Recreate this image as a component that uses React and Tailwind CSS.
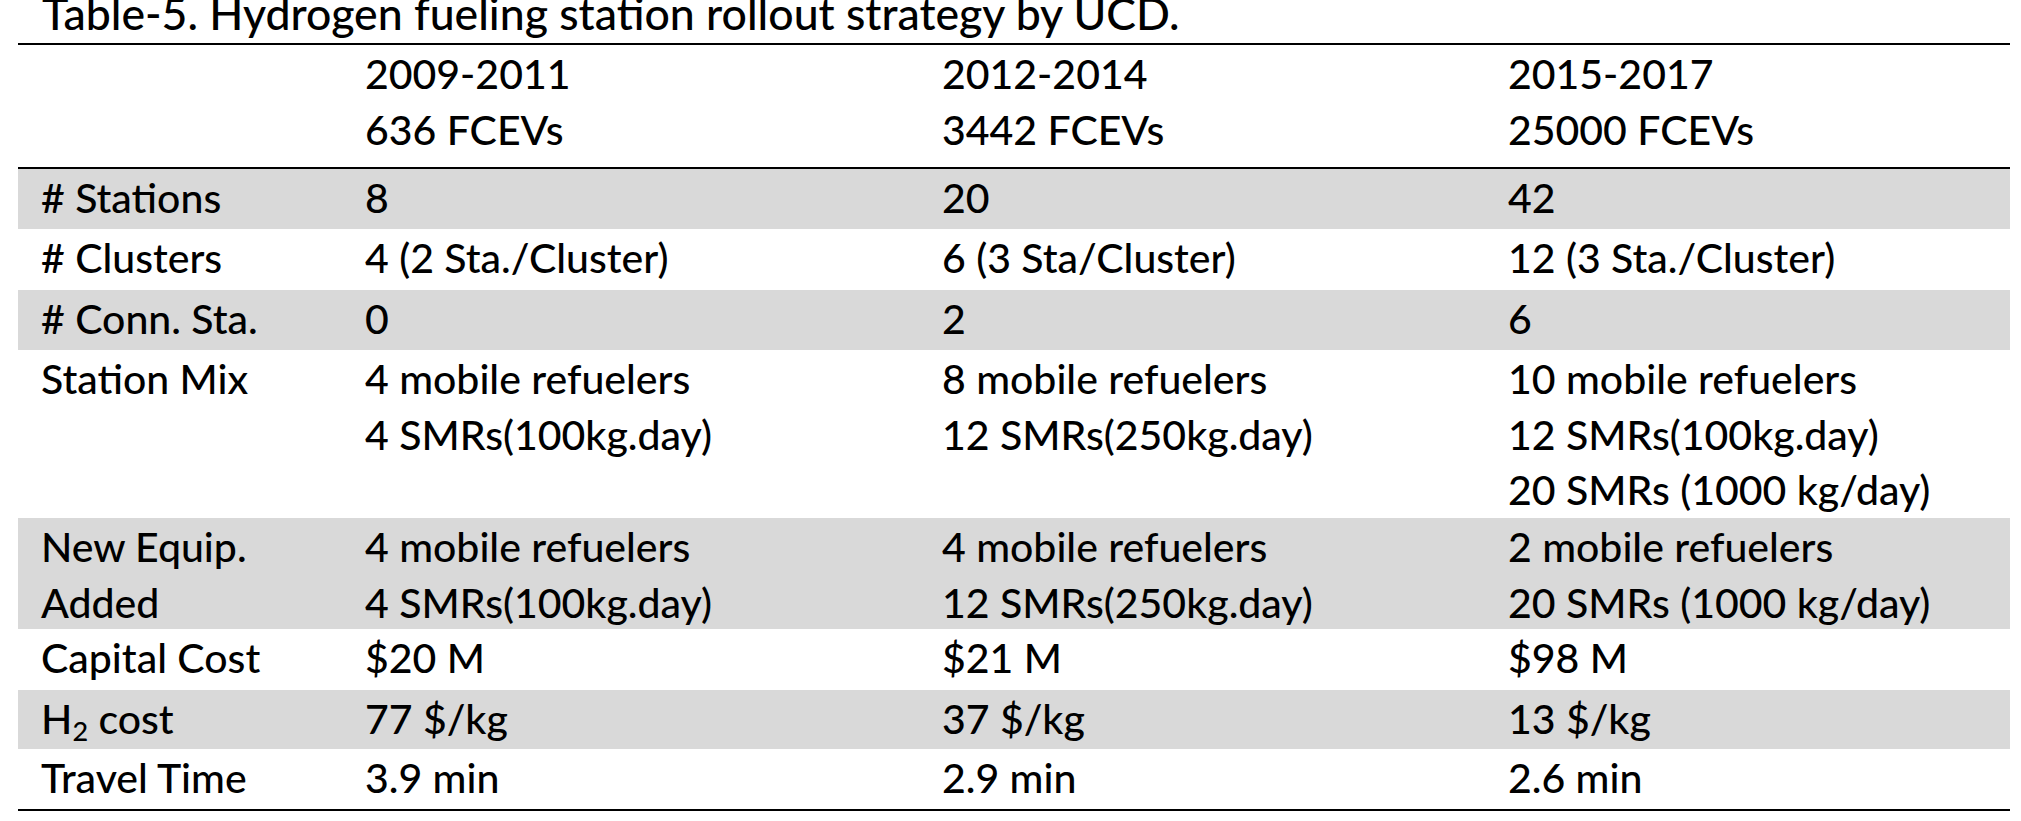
import React from 'react';

const rows = [
  { label: '# Stations', cells: [['8'], ['20'], ['42']], gray: true, h: 'h-[60px]' },
  { label: '# Clusters', cells: [['4 (2 Sta./Cluster)'], ['6 (3 Sta/Cluster)'], ['12 (3 Sta./Cluster)']], h: 'h-[61px]' },
  { label: '# Conn. Sta.', cells: [['0'], ['2'], ['6']], gray: true, h: 'h-[60px]' },
  {
    label: 'Station Mix',
    cells: [
      ['4 mobile refuelers', '4 SMRs(100kg.day)'],
      ['8 mobile refuelers', '12 SMRs(250kg.day)'],
      ['10 mobile refuelers', '12 SMRs(100kg.day)', '20 SMRs (1000 kg/day)'],
    ],
    h: 'h-[168px]',
  },
  {
    label: ['New Equip.', 'Added'],
    cells: [
      ['4 mobile refuelers', '4 SMRs(100kg.day)'],
      ['4 mobile refuelers', '12 SMRs(250kg.day)'],
      ['2 mobile refuelers', '20 SMRs (1000 kg/day)'],
    ],
    gray: true,
    h: 'h-[111px]',
  },
  { label: 'Capital Cost', cells: [['$20 M'], ['$21 M'], ['$98 M']], h: 'h-[61px]' },
  { label: 'h2', cells: [['77 $/kg'], ['37 $/kg'], ['13 $/kg']], gray: true, h: 'h-[59px]' },
  { label: 'Travel Time', cells: [['3.9 min'], ['2.9 min'], ['2.6 min']], h: 'h-[60px]' },
];

const periods = [
  ['2009-2011', '636 FCEVs'],
  ['2012-2014', '3442 FCEVs'],
  ['2015-2017', '25000 FCEVs'],
];

const Cell = ({ lines }) => (
  <div className="pl-[23px] pt-[1px] whitespace-nowrap">
    {lines.map((line, i) => (
      <div key={i}>{line}</div>
    ))}
  </div>
);

const Label = ({ label }) => {
  if (label === 'h2') {
    return (
      <div className="pl-[23px] pt-[1px] whitespace-nowrap">
        H<sub className="text-[27px]">2</sub> cost
      </div>
    );
  }
  return <Cell lines={Array.isArray(label) ? label : [label]} />;
};

export default function App() {
  return (
    <div
      className="w-[2021px] h-[821px] overflow-hidden bg-white text-black text-[41px] leading-[55.5px] font-medium"
      style={{ fontFamily: 'Lato, "Open Sans", sans-serif' }}
    >
      {/* caption, its top is cropped in the source */}
      <div className="-mt-[15px] h-[58px] pl-[42px] text-[44.6px] whitespace-nowrap">
        Table-5. Hydrogen fueling station rollout strategy by UCD.
      </div>

      <div className="ml-[18px] w-[1992px] border-t-2 border-b-2 border-black">
        {/* column heads */}
        <div className="grid grid-cols-[324px_577px_566px_525px] h-[124px] border-b-2 border-black">
          <div />
          {periods.map((p, i) => (
            <Cell key={i} lines={p} />
          ))}
        </div>

        {rows.map((row, i) => (
          <div
            key={i}
            className={`grid grid-cols-[324px_577px_566px_525px] ${row.h} ${row.gray ? 'bg-[#d9d9d9]' : ''}`}
          >
            <Label label={row.label} />
            {row.cells.map((c, j) => (
              <Cell key={j} lines={c} />
            ))}
          </div>
        ))}
      </div>
    </div>
  );
}
